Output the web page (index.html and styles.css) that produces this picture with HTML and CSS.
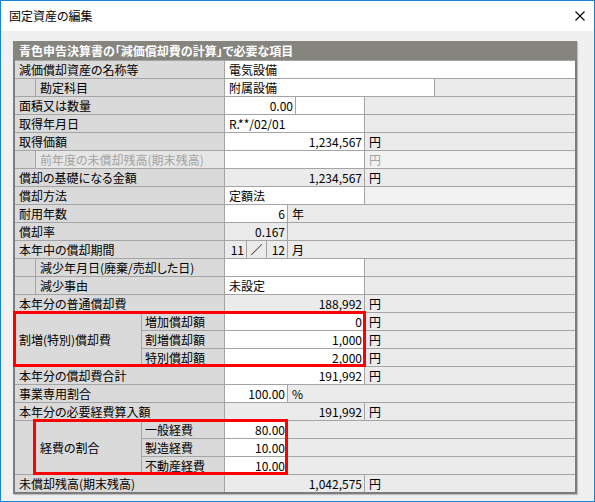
FILE: index.html
```html
<!DOCTYPE html>
<html lang="ja">
<head>
<meta charset="utf-8">
<title>固定資産の編集</title>
<link rel="stylesheet" href="styles.css">
</head>
<body>
<div class="window">
  <div class="titlebar">
    <span class="title">固定資産の編集</span>
    <svg class="close" width="10" height="10" viewBox="0 0 10 10"><path d="M0.5 0.5 L9.5 9.5 M9.5 0.5 L0.5 9.5" stroke="#000" stroke-width="1.1" fill="none"/></svg>
  </div>
  <div class="client">
    <div class="panel">
      <div class="panel-head">青色申告決算書の「減価償却費の計算」で必要な項目</div>
      <div class="grid">
        <div class="lab">減価償却資産の名称等</div>
        <div class="v-all white">電気設備</div>

        <div class="ind"></div>
        <div class="sub">勘定科目</div>
        <div class="v-all split"><span class="split-box">附属設備</span><span class="split-rest"></span></div>

        <div class="lab">面積又は数量</div>
        <div class="v-qty white num">0.00</div>
        <div class="v-box white"></div>
        <div class="unit"></div>

        <div class="lab">取得年月日</div>
        <div class="val white">R.**/02/01</div>
        <div class="unit"></div>

        <div class="lab">取得価額</div>
        <div class="val white num">1,234,567</div>
        <div class="unit">円</div>

        <div class="ind"></div>
        <div class="sub off">前年度の未償却残高(期末残高)</div>
        <div class="val white num"></div>
        <div class="unit light off">円</div>

        <div class="lab">償却の基礎になる金額</div>
        <div class="val num">1,234,567</div>
        <div class="unit">円</div>

        <div class="lab">償却方法</div>
        <div class="val white">定額法</div>
        <div class="unit light"></div>

        <div class="lab">耐用年数</div>
        <div class="v-sm white num">6</div>
        <div class="u-sm">年</div>

        <div class="lab">償却率</div>
        <div class="v-sm num">0.167</div>
        <div class="u-sm"></div>

        <div class="lab">本年中の償却期間</div>
        <div class="p-from num">11</div>
        <div class="p-sep">／</div>
        <div class="p-to num">12</div>
        <div class="u-sm">月</div>

        <div class="ind"></div>
        <div class="sub">減少年月日(廃棄/売却した日)</div>
        <div class="val white"></div>
        <div class="unit"></div>

        <div class="ind"></div>
        <div class="sub">減少事由</div>
        <div class="val white">未設定</div>
        <div class="unit"></div>

        <div class="lab">本年分の普通償却費</div>
        <div class="val num">188,992</div>
        <div class="unit">円</div>

        <div class="grp-wide">割増(特別)償却費</div>
        <div class="item">増加償却額</div>
        <div class="val white num">0</div>
        <div class="unit">円</div>
        <div class="item">割増償却額</div>
        <div class="val white num">1,000</div>
        <div class="unit">円</div>
        <div class="item">特別償却額</div>
        <div class="val white num">2,000</div>
        <div class="unit">円</div>

        <div class="lab">本年分の償却費合計</div>
        <div class="val white num">191,992</div>
        <div class="unit">円</div>

        <div class="lab">事業専用割合</div>
        <div class="v-sm white num">100.00</div>
        <div class="u-sm">%</div>

        <div class="lab">本年分の必要経費算入額</div>
        <div class="val num">191,992</div>
        <div class="unit">円</div>

        <div class="ind-tall"></div>
        <div class="grp-narrow">経費の割合</div>
        <div class="item">一般経費</div>
        <div class="v-sm white num">80.00</div>
        <div class="u-sm"></div>
        <div class="item">製造経費</div>
        <div class="v-sm white num">10.00</div>
        <div class="u-sm"></div>
        <div class="item">不動産経費</div>
        <div class="v-sm white num">10.00</div>
        <div class="u-sm"></div>

        <div class="lab">未償却残高(期末残高)</div>
        <div class="val num">1,042,575</div>
        <div class="unit">円</div>
      </div>
      <div class="mark mark-extra"></div>
      <div class="mark mark-ratio"></div>
    </div>
  </div>
</div>
</body>
</html>
```

FILE: styles.css
```css
html, body {
  margin: 0;
  padding: 0;
}

body {
  width: 595px;
  height: 502px;
  font-family: "Noto Sans CJK JP", "Noto Sans", sans-serif;
  font-size: 12px;
  color: #000;
  font-feature-settings: "palt";
}

.window {
  box-sizing: border-box;
  width: 595px;
  height: 502px;
  border: 1px solid #1a84d6;
  background: #f0f0f0;
  display: flex;
  flex-direction: column;
}

.titlebar {
  flex: none;
  height: 30px;
  background: #fff;
  display: flex;
  align-items: center;
  justify-content: space-between;
  padding: 0 9px 0 8px;
}

.title {
  font-size: 12px;
  line-height: 16px;
  color: #000;
}

.close {
  display: block;
}

.client {
  flex: 1;
  padding: 10px 0 0 12px;
}

.panel {
  position: relative;
  width: 560px;
  border: 2px solid #7c7c7c;
  border-top: none;
  box-shadow: 1px 1px 1px rgba(0, 0, 0, 0.2);
}

.panel-head {
  margin: 0 -2px;
  height: 19px;
  line-height: 20px;
  padding-left: 6px;
  background: #86847e;
  color: #fff;
  font-weight: bold;
  border-radius: 4px 4px 0 0;
  white-space: nowrap;
}

.grid {
  display: grid;
  grid-template-columns: 20px 105px 82px 21px 19px 20px 7px 68px 210px;
  grid-auto-rows: 17px;
  gap: 1px;
  padding-top: 1px;
  background: #a4a4a4;
}

.grid > div {
  line-height: 17px;
  white-space: nowrap;
  overflow: hidden;
  padding: 0 4px;
  background: #ebebeb;
}

.grid > .lab,
.grid > .ind,
.grid > .ind-tall,
.grid > .sub,
.grid > .item,
.grid > .grp-wide,
.grid > .grp-narrow {
  background: #dadada;
}

.lab { grid-column: 1 / 4; }
.ind { grid-column: 1 / 2; }
.sub { grid-column: 2 / 4; }
.item { grid-column: 3 / 4; padding-left: 3px !important; }
.grp-wide { grid-column: 1 / 3; grid-row: span 3; display: flex; align-items: center; }
.ind-tall { grid-column: 1 / 2; grid-row: span 3; }
.grp-narrow { grid-column: 2 / 3; grid-row: span 3; display: flex; align-items: center; }

.v-all { grid-column: 4 / 10; }
.val { grid-column: 4 / 9; }
.unit { grid-column: 9 / 10; }
.v-qty { grid-column: 4 / 8; }
.v-box { grid-column: 8 / 9; }
.v-sm { grid-column: 4 / 7; }
.u-sm { grid-column: 7 / 10; }
.p-from { grid-column: 4 / 5; }
.p-sep { grid-column: 5 / 6; text-align: center; padding: 0 !important; }
.p-to { grid-column: 6 / 7; }

.grid > .white { background: #fff; }
.grid > .light { background: #f2f2f2; }
.grid > .sub.off { background: #e6e6e6; }
.off { color: #a3a3a3; }

.grid > .num {
  text-align: right;
  padding: 0 2px 0 0;
}

.grid > .split {
  display: flex;
  padding: 0;
  background: #a4a4a4;
  gap: 1px;
}

.split-box {
  width: 205px;
  padding: 0 0 0 4px;
  background: #fff;
}

.split-rest {
  flex: 1;
  background: #ebebeb;
}

.mark {
  position: absolute;
  box-sizing: border-box;
  border: 3px solid #f00;
  height: 56px;
}

.mark-extra {
  left: -2px;
  top: 270px;
  width: 353px;
}

.mark-ratio {
  left: 18px;
  top: 378px;
  width: 255px;
}
```
